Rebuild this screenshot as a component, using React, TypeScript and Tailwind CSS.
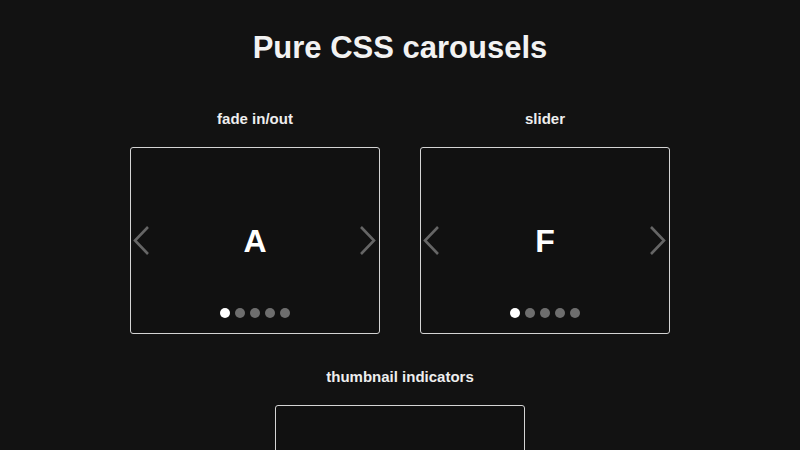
import { useState } from "react";

function Chevron({ dir }: { dir: "left" | "right" }) {
  return (
    <svg width="16" height="30" viewBox="0 0 16 30" className="text-[#666]">
      <path
        d={dir === "left" ? "M15 1 L2 14.5 L15 28" : "M1 1 L14 14.5 L1 28"}
        fill="none"
        stroke="currentColor"
        strokeWidth="2.6"
      />
    </svg>
  );
}

function Carousel({ title, slides }: { title: string; slides: string[] }) {
  const [active, setActive] = useState(0);
  const prev = () => setActive((active + slides.length - 1) % slides.length);
  const next = () => setActive((active + 1) % slides.length);

  return (
    <section className="flex flex-col items-center">
      <h2 className="text-[15px] font-bold leading-5 text-[#eee] mb-[18px]">{title}</h2>
      <div className="relative w-[250px] h-[187px] rounded-[3px] border border-[#d4d4d4] bg-[#111]">
        <div className="absolute inset-0 flex items-center justify-center">
          <span className="text-[32px] font-bold text-white leading-none">{slides[active]}</span>
        </div>
        <button onClick={prev} className="absolute left-[2px] top-[78px]">
          <Chevron dir="left" />
        </button>
        <button onClick={next} className="absolute right-[3px] top-[78px]">
          <Chevron dir="right" />
        </button>
        <div className="absolute bottom-[15px] left-0 right-0 flex justify-center gap-[5px]">
          {slides.map((s, i) => (
            <button
              key={s}
              onClick={() => setActive(i)}
              className={
                "w-[10px] h-[10px] rounded-full " +
                (i === active ? "bg-white" : "bg-[#6e6e6e]")
              }
            />
          ))}
        </div>
      </div>
    </section>
  );
}

export default function App() {
  return (
    <div
      className="h-[450px] overflow-hidden bg-[#121212] text-white flex flex-col items-center pt-[28px]"
      style={{ fontFamily: '"Liberation Sans", Arial, sans-serif' }}
    >
      <h1 className="text-[31px] font-bold leading-10 text-[#f2f2f2] mb-[41px]">Pure CSS carousels</h1>
      <div className="flex gap-[40px]">
        <Carousel title="fade in/out" slides={["A", "B", "C", "D", "E"]} />
        <Carousel title="slider" slides={["F", "G", "H", "I", "J"]} />
      </div>
      <div className="mt-[33px] shrink-0">
        <Carousel title="thumbnail indicators" slides={["K", "L", "M", "N", "O"]} />
      </div>
    </div>
  );
}
